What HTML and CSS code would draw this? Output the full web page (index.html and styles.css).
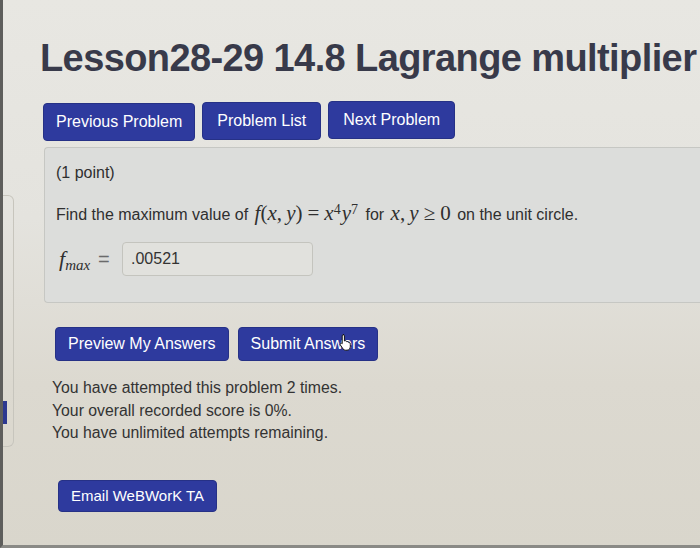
FILE: index.html
```html
<!DOCTYPE html>
<html>
<head>
<meta charset="utf-8">
<link rel="stylesheet" href="styles.css">
</head>
<body>
<div class="frame">
  <div class="side">
    <div class="side-btn"></div>
  </div>
  <main class="main">
    <h1 class="title">Lesson28-29 14.8 Lagrange multiplier</h1>
    <nav class="nav">
      <button class="btn nav-prev">Previous Problem</button>
      <button class="btn nav-list">Problem List</button>
      <button class="btn nav-next">Next Problem</button>
    </nav>
    <section class="problem">
      <p class="points">(1 point)</p>
      <p class="statement">Find the maximum value of <span class="mexpr"><span class="math">f</span><span class="mathr">(</span><span class="math">x</span><span class="mathr">,&thinsp;</span><span class="math">y</span><span class="mathr">)</span><span class="mathr rel">=</span><span class="math">x</span><sup class="msup">4</sup><span class="math">y</span><sup class="msup">7</sup></span> for <span class="mexpr"><span class="math">x</span><span class="mathr">,&thinsp;</span><span class="math">y</span><span class="mathr rel">&ge;</span><span class="mathr">0</span></span> on the unit circle.</p>
      <div class="answer-row">
        <span class="fmax"><span class="math big">f</span><sub class="msub">max</sub></span>
        <span class="eq">=</span>
        <span class="input">.00521</span>
      </div>
    </section>
    <div class="submit-row">
      <button class="btn btn-sm">Preview My Answers</button>
      <button class="btn btn-sm submit">Submit Answers<svg class="cursor" width="14" height="18" viewBox="0 0 14 18"><path d="M4 1.5c.8 0 1.4.6 1.4 1.4V8l.3-.1c.7-.4 1.6-.1 1.9.6l.1.2c.6-.3 1.4-.1 1.7.5.6-.2 1.3.1 1.6.7.2.4.3.9.3 1.4v2.4c0 1.9-1.3 3.5-3.3 3.5H6.4c-1 0-1.8-.5-2.4-1.3L1.4 12c-.4-.6-.2-1.3.4-1.6.5-.3 1.1-.2 1.5.2l-.1-.1V2.9c0-.8.6-1.4 1.4-1.4z" fill="#fff" stroke="#111" stroke-width="1"/></svg></button>
    </div>
    <div class="status">
      <p>You have attempted this problem 2 times.</p>
      <p>Your overall recorded score is 0%.</p>
      <p>You have unlimited attempts remaining.</p>
    </div>
    <button class="btn btn-email">Email WeBWorK TA</button>
  </main>
</div>
</body>
</html>
```
FILE: styles.css
```css
html, body {
  margin: 0;
  padding: 0;
}
body {
  width: 700px;
  height: 548px;
  overflow: hidden;
  background: linear-gradient(180deg, #e8e7e2 0%, #e4e3de 40%, #dcd9d0 70%, #d9d6cc 100%);
  font-family: "Liberation Sans", Arial, sans-serif;
  color: #333;
}
.frame {
  display: flex;
  border-left: 3px solid #5e5e5c;
  border-bottom: 3px solid #8a8a86;
  box-sizing: border-box;
  height: 548px;
}
.side {
  flex: none;
  width: 10px;
  height: 250px;
  margin-top: 195px;
  border: 1px solid #c7c5bd;
  border-left: none;
  border-radius: 0 6px 6px 0;
  display: flex;
  flex-direction: column;
}
.side-btn {
  width: 4px;
  height: 23px;
  margin-top: 205px;
  background: #2c3890;
}
.main {
  flex: 1;
  padding-left: 26px;
  min-width: 0;
}
.title {
  margin: 34px 0 0 0;
  font-size: 38px;
  line-height: 48px;
  font-weight: bold;
  color: #383a4a;
  white-space: nowrap;
  letter-spacing: -0.6px;
}
.nav {
  display: flex;
  align-items: flex-start;
  gap: 7px;
  margin: 20px 0 0 3px;
}
.btn {
  font-family: "Liberation Sans", Arial, sans-serif;
  font-size: 16px;
  line-height: 20px;
  color: #fff;
  background: #2e3a9e;
  border: 1px solid #263186;
  border-radius: 4px;
  padding: 8px 14px;
  cursor: pointer;
}
.nav-prev { margin-top: 1px; padding: 8px 12px; }
.nav-list { margin-top: 0; }
.nav-next { margin-top: -1px; }
.problem {
  margin: 6px 0 0 4px;
  height: 156px;
  box-sizing: border-box;
  background: #dcdddb;
  border: 1px solid #c6c7c3;
  border-right: none;
  border-radius: 4px 0 0 4px;
  padding: 15px 0 0 11px;
}
.problem p {
  margin: 0;
  font-size: 16px;
  line-height: 20px;
  color: #2f2f2f;
  white-space: nowrap;
}
.statement {
  margin-top: 20px !important;
}
.mexpr {
  margin: 0 2px;
}
.math {
  font-family: "Liberation Serif", "Times New Roman", serif;
  font-style: italic;
  font-size: 21px;
}
.mathr {
  font-family: "Liberation Serif", "Times New Roman", serif;
  font-size: 21px;
}
.rel {
  margin: 0 5px;
}
.msup {
  font-family: "Liberation Serif", "Times New Roman", serif;
  font-size: 14px;
  line-height: 0;
  margin-right: 1px;
}
.answer-row {
  display: flex;
  align-items: center;
  margin-top: 17px;
  height: 34px;
}
.fmax {
  width: 39px;
  padding-left: 3px;
  color: #2f2f2f;
}
.big {
  font-size: 22px;
}
.msub {
  font-family: "Liberation Serif", "Times New Roman", serif;
  font-style: italic;
  font-size: 15px;
  line-height: 0;
}
.eq {
  font-size: 20px;
  color: #6a6a6a;
  width: 24px;
}
.input {
  box-sizing: border-box;
  width: 191px;
  height: 34px;
  border: 1px solid #c4c4be;
  border-radius: 4px;
  background: #e1e1dd;
  padding: 0 8px;
  font-size: 16px;
  line-height: 32px;
  color: #333;
}
.submit-row {
  display: flex;
  gap: 9px;
  margin: 24px 0 0 15px;
}
.btn-sm {
  padding: 6px 12px;
}
.submit {
  position: relative;
}
.cursor {
  position: absolute;
  left: 100px;
  top: 5px;
}
.status {
  margin: 16px 0 0 12px;
}
.status p {
  margin: 0;
  font-size: 15.8px;
  line-height: 22.5px;
  color: #333;
}
.btn-email {
  display: block;
  margin: 35px 0 0 18px;
  font-size: 15px;
  padding: 5px 12px;
}
```
